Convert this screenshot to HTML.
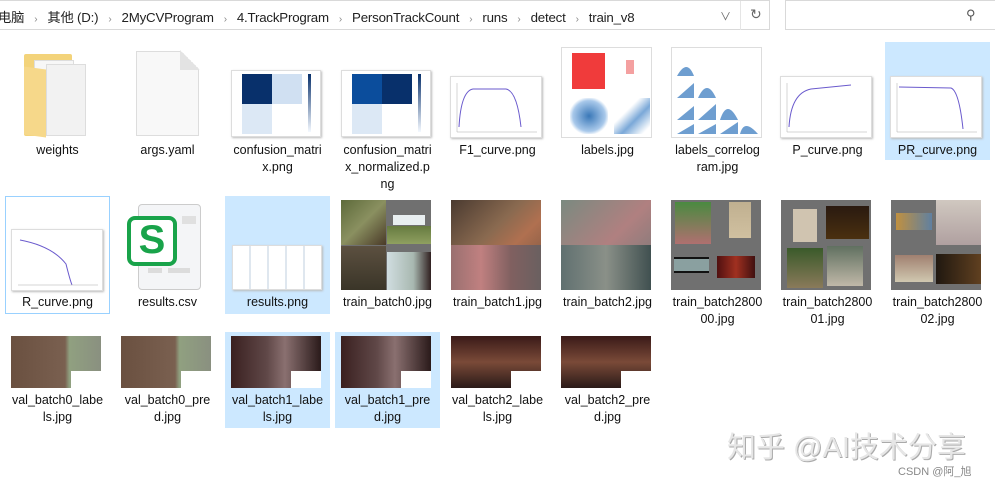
<!DOCTYPE html>
<html><head><meta charset="utf-8"><style>
*{margin:0;padding:0;box-sizing:border-box}
body{width:995px;height:486px;background:#fff;position:relative;overflow:hidden;font-family:"Liberation Sans","Noto Sans CJK SC",sans-serif;font-size:12px;color:#111}
.a{position:absolute}
.addr{left:-2px;top:0;width:772px;height:30px;border:1px solid #d9d9d9;border-left:none}
.crumb{position:absolute;top:6px;left:0;font-size:13.3px;color:#222;white-space:nowrap;letter-spacing:-0.2px}
.crumb span.s{color:#888;margin:0 10px;font-size:10px}
.search{left:785px;top:0;width:212px;height:30px;border:1px solid #d9d9d9}
.sel{background:#cce8ff}
.lbl{position:absolute;width:105px;text-align:center;line-height:17px;font-size:12.5px;color:#111}
.g{background:#707070}
.th{position:absolute;overflow:hidden}
.plot{background:#fff;border:1px solid #ddd;box-shadow:1px 1px 2px #bbb}
</style></head><body>
<div class="a addr">
 <div class="crumb">电脑<span class="s">›</span>其他 (D:)<span class="s">›</span>2MyCVProgram<span class="s">›</span>4.TrackProgram<span class="s">›</span>PersonTrackCount<span class="s">›</span>runs<span class="s">›</span>detect<span class="s">›</span>train_v8</div>
 <div class="a" style="left:722px;top:7px;color:#666;font-size:11px">∨</div>
 <div class="a" style="left:742px;top:0;width:1px;height:29px;background:#e5e5e5"></div>
 <div class="a" style="left:752px;top:5px;color:#666;font-size:14px">↻</div>
</div>
<div class="a search"><div class="a" style="left:180px;top:6px;color:#555;font-size:13px">⚲</div></div>

<!-- row1 -->
<div class="a sel" style="left:885px;top:42px;width:105px;height:118px"></div>
<div class="a" style="left:24px;top:54px;width:62px;height:82px">
 <div class="a" style="left:0;top:0;width:48px;height:82px;background:#f3d37a;border-radius:2px"></div>
 <div class="a" style="left:10px;top:6px;width:40px;height:72px;background:#f7f7f7;border:1px solid #ddd"></div>
 <div class="a" style="left:22px;top:10px;width:40px;height:72px;background:#f2f2f2;border:1px solid #ddd"></div>
 <div class="a" style="left:0;top:14px;width:22px;height:68px;background:#f6d88a;transform:skewY(8deg)"></div>
</div>
<div class="lbl" style="left:5px;top:142px">weights</div>
<div class="a" style="left:136px;top:51px;width:63px;height:85px;background:#f8f8f8;border:1px solid #ddd"></div>
<div class="a" style="left:180px;top:50px;width:20px;height:20px;background:linear-gradient(225deg,#fff 50%,#e3e3e3 50%)"></div>
<div class="lbl" style="left:115px;top:142px">args.yaml</div>
<div class="th plot" style="left:231px;top:70px;width:90px;height:67px">
 <div class="a" style="left:10px;top:3px;width:30px;height:30px;background:#08306b"></div>
 <div class="a" style="left:40px;top:3px;width:30px;height:30px;background:#d0e0f2"></div>
 <div class="a" style="left:10px;top:33px;width:30px;height:30px;background:#dce8f5"></div>
 <div class="a" style="left:76px;top:3px;width:3px;height:58px;background:linear-gradient(#08306b,#f4f9ff)"></div>
</div>
<div class="lbl" style="left:225px;top:142px">confusion_matri<br>x.png</div>
<div class="th plot" style="left:341px;top:70px;width:90px;height:67px">
 <div class="a" style="left:10px;top:3px;width:30px;height:30px;background:#0b4d9c"></div>
 <div class="a" style="left:40px;top:3px;width:30px;height:30px;background:#08306b"></div>
 <div class="a" style="left:10px;top:33px;width:30px;height:30px;background:#dce8f5"></div>
 <div class="a" style="left:76px;top:3px;width:3px;height:58px;background:linear-gradient(#08306b,#f4f9ff)"></div>
</div>
<div class="lbl" style="left:335px;top:142px">confusion_matri<br>x_normalized.p<br>ng</div>
<div class="th plot" style="left:450px;top:76px;width:92px;height:62px">
 <svg width="92" height="62"><path d="M8 50 Q10 14 22 12 L55 12 Q66 14 70 50" fill="none" stroke="#6a5acd" stroke-width="1"/><line x1="6" y1="55" x2="86" y2="55" stroke="#aaa" stroke-width=".5"/><line x1="6" y1="6" x2="6" y2="55" stroke="#aaa" stroke-width=".5"/></svg>
</div>
<div class="lbl" style="left:445px;top:142px">F1_curve.png</div>
<div class="th" style="left:561px;top:47px;width:91px;height:91px;background:#fff;border:1px solid #ddd">
 <div class="a" style="left:10px;top:5px;width:33px;height:36px;background:#f03b3b"></div>
 <div class="a" style="left:64px;top:12px;width:8px;height:14px;background:#f4a0a0"></div>
 <div class="a" style="left:8px;top:50px;width:38px;height:36px;background:radial-gradient(#3a78b8,#a8c8ea 60%,#fff 75%)"></div>
 <div class="a" style="left:52px;top:50px;width:36px;height:36px;background:linear-gradient(135deg,#fff 35%,#7aa8d8 60%,#fff 90%)"></div>
</div>
<div class="lbl" style="left:555px;top:142px">labels.jpg</div>
<div class="th" style="left:671px;top:47px;width:91px;height:91px;background:#fff;border:1px solid #ddd">
 <svg width="91" height="91"><g fill="#4a86c5" opacity=".8"><path d="M5 28 Q15 10 22 28Z"/><path d="M5 50 L22 35 L22 50Z"/><path d="M26 50 Q35 30 44 50Z"/><path d="M5 72 L22 58 L22 72Z"/><path d="M26 72 L44 56 L44 72Z"/><path d="M48 72 Q55 50 66 72Z"/><path d="M5 86 L22 76 L22 86Z"/><path d="M26 86 L44 76 L44 86Z"/><path d="M48 86 L66 74 L66 86Z"/><path d="M68 86 Q72 70 86 86Z"/></g></svg>
</div>
<div class="lbl" style="left:665px;top:142px">labels_correlog<br>ram.jpg</div>
<div class="th plot" style="left:780px;top:76px;width:92px;height:62px">
 <svg width="92" height="62"><path d="M8 50 Q10 16 30 12 L70 8" fill="none" stroke="#6a5acd" stroke-width="1"/><line x1="6" y1="55" x2="86" y2="55" stroke="#aaa" stroke-width=".5"/><line x1="6" y1="6" x2="6" y2="55" stroke="#aaa" stroke-width=".5"/></svg>
</div>
<div class="lbl" style="left:775px;top:142px">P_curve.png</div>
<div class="th plot" style="left:890px;top:76px;width:92px;height:62px">
 <svg width="92" height="62"><path d="M8 10 L60 11 Q68 14 72 52" fill="none" stroke="#6a5acd" stroke-width="1"/><line x1="6" y1="55" x2="86" y2="55" stroke="#aaa" stroke-width=".5"/><line x1="6" y1="6" x2="6" y2="55" stroke="#aaa" stroke-width=".5"/></svg>
</div>
<div class="lbl" style="left:885px;top:142px">PR_curve.png</div>

<!-- row2 -->
<div class="a" style="left:5px;top:196px;width:105px;height:118px;border:1px solid #99d1ff;background:#fff"></div>
<div class="a sel" style="left:225px;top:196px;width:105px;height:118px"></div>
<div class="th plot" style="left:11px;top:229px;width:92px;height:62px">
 <svg width="92" height="62"><path d="M8 10 Q40 16 54 34 Q58 50 60 55" fill="none" stroke="#6a5acd" stroke-width="1"/><line x1="6" y1="55" x2="86" y2="55" stroke="#aaa" stroke-width=".5"/></svg>
</div>
<div class="lbl" style="left:5px;top:294px">R_curve.png</div>
<div class="a" style="left:138px;top:204px;width:63px;height:86px;background:#f4f5f7;border:1px solid #ccc;border-radius:4px"></div>
<div class="a" style="left:182px;top:216px;width:14px;height:8px;background:#e0e0e0"></div>
<div class="a" style="left:148px;top:268px;width:14px;height:5px;background:#dcdcdc"></div>
<div class="a" style="left:168px;top:268px;width:22px;height:5px;background:#dcdcdc"></div>
<div class="a" style="left:127px;top:216px;width:50px;height:50px;border:4px solid #19a34a;border-radius:8px;background:#fff;color:#19a34a;font:bold 40px/40px 'Liberation Sans',sans-serif;text-align:center">S</div>
<div class="lbl" style="left:115px;top:294px">results.csv</div>
<div class="th plot" style="left:232px;top:245px;width:90px;height:45px;background:repeating-linear-gradient(90deg,#fff 0 16px,#dfe7ef 16px 18px)"></div>
<div class="lbl" style="left:225px;top:294px">results.png</div>
<div class="th g" style="left:341px;top:200px;width:90px;height:90px">
 <div class="a" style="left:0;top:0;width:45px;height:45px;background:linear-gradient(135deg,#5d6a3a,#8a9060,#4a3a28)"></div>
 <div class="a" style="left:46px;top:26px;width:44px;height:18px;background:linear-gradient(#667a40,#8fa060)"></div>
 <div class="a" style="left:52px;top:15px;width:32px;height:10px;background:#e8eef0"></div>
 <div class="a" style="left:0;top:46px;width:45px;height:44px;background:linear-gradient(#5c5040,#3a3528)"></div>
 <div class="a" style="left:46px;top:52px;width:44px;height:38px;background:linear-gradient(90deg,#d0dde0,#a8b8b0 60%,#302020)"></div>
</div>
<div class="lbl" style="left:335px;top:294px">train_batch0.jpg</div>
<div class="th g" style="left:451px;top:200px;width:90px;height:90px;background:linear-gradient(135deg,#4a3a30,#8a6a50 40%,#b07050 60%,#6a5040)">
 <div class="a" style="left:0;top:45px;width:90px;height:45px;background:linear-gradient(90deg,#9a7070,#c08080,#806060,#6a6060)"></div>
</div>
<div class="lbl" style="left:445px;top:294px">train_batch1.jpg</div>
<div class="th g" style="left:561px;top:200px;width:90px;height:90px;background:linear-gradient(135deg,#7a8a80,#b08080,#707878)">
 <div class="a" style="left:0;top:45px;width:90px;height:45px;background:linear-gradient(90deg,#607070,#8a9088,#405050)"></div>
</div>
<div class="lbl" style="left:555px;top:294px">train_batch2.jpg</div>
<div class="th g" style="left:671px;top:200px;width:90px;height:90px">
 <div class="a" style="left:4px;top:2px;width:36px;height:42px;background:linear-gradient(#4a8a40,#b07070)"></div>
 <div class="a" style="left:58px;top:2px;width:22px;height:36px;background:linear-gradient(#c0b090,#d0c0a0)"></div>
 <div class="a" style="left:3px;top:57px;width:35px;height:16px;background:#8aa0a0;border-top:2px solid #111;border-bottom:2px solid #111"></div>
 <div class="a" style="left:46px;top:56px;width:38px;height:22px;background:linear-gradient(90deg,#501010,#a03020,#401010)"></div>
</div>
<div class="lbl" style="left:665px;top:294px">train_batch2800<br>00.jpg</div>
<div class="th g" style="left:781px;top:200px;width:90px;height:90px">
 <div class="a" style="left:12px;top:9px;width:24px;height:33px;background:#d0c4b0"></div>
 <div class="a" style="left:45px;top:6px;width:43px;height:33px;background:linear-gradient(#2a1a10,#4a3010)"></div>
 <div class="a" style="left:6px;top:48px;width:36px;height:40px;background:linear-gradient(#3a5a2a,#8a7a5a)"></div>
 <div class="a" style="left:46px;top:46px;width:36px;height:40px;background:linear-gradient(#607060,#c0b8a8)"></div>
</div>
<div class="lbl" style="left:775px;top:294px">train_batch2800<br>01.jpg</div>
<div class="th g" style="left:891px;top:200px;width:90px;height:90px">
 <div class="a" style="left:5px;top:13px;width:36px;height:17px;background:linear-gradient(90deg,#c09040,#6080a0)"></div>
 <div class="a" style="left:45px;top:0;width:45px;height:45px;background:linear-gradient(#d0c8c0,#b0a0a0)"></div>
 <div class="a" style="left:4px;top:55px;width:38px;height:27px;background:linear-gradient(#a08070,#d0c8b0)"></div>
 <div class="a" style="left:45px;top:54px;width:45px;height:30px;background:linear-gradient(90deg,#201810,#604020)"></div>
</div>
<div class="lbl" style="left:885px;top:294px">train_batch2800<br>02.jpg</div>

<!-- row3 -->
<div class="a sel" style="left:225px;top:332px;width:105px;height:96px"></div>
<div class="a sel" style="left:335px;top:332px;width:105px;height:96px"></div>
<div class="th" style="left:11px;top:336px;width:90px;height:52px;background:linear-gradient(90deg,#6a5040,#7a6050 60%,#90a080 65%,#8a9080)"><div class="a" style="left:60px;top:35px;width:30px;height:17px;background:#fff"></div></div>
<div class="lbl" style="left:5px;top:392px">val_batch0_labe<br>ls.jpg</div>
<div class="th" style="left:121px;top:336px;width:90px;height:52px;background:linear-gradient(90deg,#6a5040,#7a6050 60%,#90a080 65%,#8a9080)"><div class="a" style="left:60px;top:35px;width:30px;height:17px;background:#fff"></div></div>
<div class="lbl" style="left:115px;top:392px">val_batch0_pre<br>d.jpg</div>
<div class="th" style="left:231px;top:336px;width:90px;height:52px;background:linear-gradient(90deg,#3a2020,#604848 40%,#8a7070 60%,#2a1a1a)"><div class="a" style="left:60px;top:35px;width:30px;height:17px;background:#fff"></div></div>
<div class="lbl" style="left:225px;top:392px">val_batch1_labe<br>ls.jpg</div>
<div class="th" style="left:341px;top:336px;width:90px;height:52px;background:linear-gradient(90deg,#3a2020,#604848 40%,#8a7070 60%,#2a1a1a)"><div class="a" style="left:60px;top:35px;width:30px;height:17px;background:#fff"></div></div>
<div class="lbl" style="left:335px;top:392px">val_batch1_pre<br>d.jpg</div>
<div class="th" style="left:451px;top:336px;width:90px;height:52px;background:linear-gradient(#3a1a18,#7a4a38 50%,#2a1a18)"><div class="a" style="left:60px;top:35px;width:30px;height:17px;background:#fff"></div></div>
<div class="lbl" style="left:445px;top:392px">val_batch2_labe<br>ls.jpg</div>
<div class="th" style="left:561px;top:336px;width:90px;height:52px;background:linear-gradient(#3a1a18,#7a4a38 50%,#2a1a18)"><div class="a" style="left:60px;top:35px;width:30px;height:17px;background:#fff"></div></div>
<div class="lbl" style="left:555px;top:392px">val_batch2_pre<br>d.jpg</div>

<div class="a" style="left:727px;top:424px;font-size:29px;color:#e6e6e6;text-shadow:1px 1px 0 #aaa;white-space:nowrap;font-family:'Liberation Sans','Noto Sans CJK SC',sans-serif">知乎 @AI技术分享</div>
<div class="a" style="left:898px;top:463px;font-size:11px;color:#888;white-space:nowrap">CSDN @阿_旭</div>
</body></html>
